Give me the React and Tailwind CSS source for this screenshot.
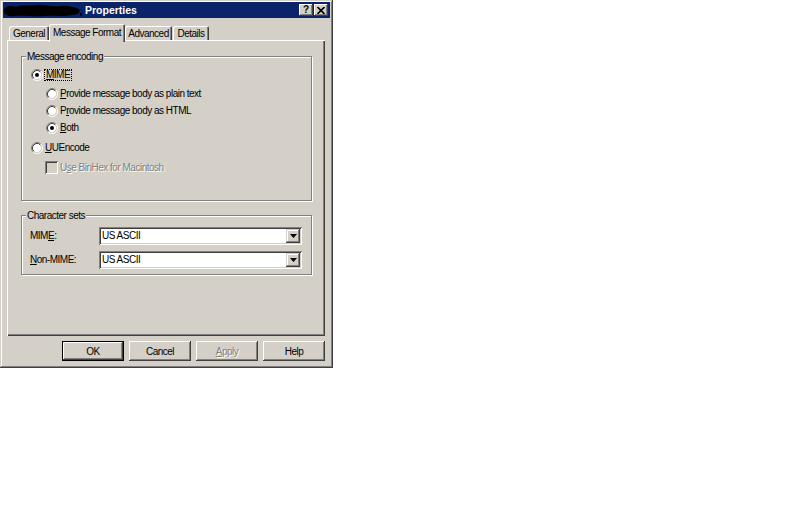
import React from "react";

function Radio({ checked }) {
  return (
    <svg width="12" height="12" viewBox="0 0 12 12" className="shrink-0">
      <circle cx="6" cy="6" r="4.2" fill="#ffffff" />
      <path d="M2.11 9.89 A5.5 5.5 0 0 1 9.89 2.11" fill="none" stroke="#808080" strokeWidth="1" />
      <path d="M9.89 2.11 A5.5 5.5 0 0 1 2.11 9.89" fill="none" stroke="#ffffff" strokeWidth="1" />
      <path d="M2.82 9.18 A4.5 4.5 0 0 1 9.18 2.82" fill="none" stroke="#404040" strokeWidth="1" />
      <path d="M9.18 2.82 A4.5 4.5 0 0 1 2.82 9.18" fill="none" stroke="#d4d0c8" strokeWidth="1" />
      {checked && <circle cx="6" cy="6" r="2" fill="#000000" />}
    </svg>
  );
}

function U({ children }) {
  return <span className="underline decoration-1 underline-offset-[1px]">{children}</span>;
}

function Tab({ label, selected, w, extra = "" }) {
  if (selected) {
    return (
      <div
        className={`relative z-10 ${w} h-[18px] mb-[-2px] bg-[#d4d0c8] rounded-t-[2px] shadow-[inset_1px_1px_#ffffff,inset_-1px_0_#404040,inset_-2px_0_#808080] flex items-start justify-center pt-[3px] ${extra}`}
      >
        <span className="leading-[12px] whitespace-nowrap">{label}</span>
      </div>
    );
  }
  return (
    <div
      className={`${w} h-[14px] bg-[#d4d0c8] rounded-t-[2px] shadow-[inset_1px_1px_#ffffff,inset_-1px_0_#404040,inset_-2px_0_#808080] flex items-start justify-center pt-[2px] ${extra}`}
    >
      <span className="leading-[12px] whitespace-nowrap">{label}</span>
    </div>
  );
}

function Combo({ value }) {
  return (
    <div className="w-[203px] h-[18px] bg-white shadow-[inset_1px_1px_#808080,inset_-1px_-1px_#ffffff,inset_2px_2px_#404040,inset_-2px_-2px_#d4d0c8] flex items-center justify-between p-[2px]">
      <span className="pl-[1px] leading-[12px]">{value}</span>
      <div className="w-[14px] h-[14px] bg-[#d4d0c8] shadow-[inset_-1px_-1px_#404040,inset_1px_1px_#d4d0c8,inset_-2px_-2px_#808080,inset_2px_2px_#ffffff] flex items-center justify-center">
        <svg width="7" height="4" viewBox="0 0 7 4">
          <path d="M0 0 H7 L3.5 4 Z" fill="#000000" />
        </svg>
      </div>
    </div>
  );
}

function Button({ children, def, disabled }) {
  const inner = (
    <div
      className={`w-full h-full flex items-center justify-center shadow-[inset_-1px_-1px_#404040,inset_1px_1px_#ffffff,inset_-2px_-2px_#808080,inset_2px_2px_#d4d0c8] ${
        disabled ? "text-[#808080] [text-shadow:1px_1px_0_#ffffff]" : "text-black"
      }`}
    >
      {children}
    </div>
  );
  return (
    <div className={`w-[62px] h-[20px] bg-[#d4d0c8] ${def ? "border border-black" : ""}`}>{inner}</div>
  );
}

export default function App() {
  return (
    <div className="w-[800px] h-[526px] bg-white font-['Liberation_Sans',Arial,sans-serif] text-[10px] tracking-[-0.5px] text-black">
      <div className="w-[333px] h-[368px] bg-[#d4d0c8] shadow-[inset_-1px_-1px_#404040,inset_1px_1px_#d4d0c8,inset_-2px_-2px_#808080,inset_2px_2px_#ffffff] pt-[2px] px-[3px] flex flex-col">
        {/* Title bar */}
        <div className="h-[16px] bg-[#0a246a] flex items-center justify-between pr-[2px]">
          <div className="flex items-center">
            <svg width="80" height="16" viewBox="0 0 80 16" className="shrink-0">
              <path
                d="M1 8 C2 4 8 3 13 5 C19 2 27 4 33 3 C41 2 49 5 57 4 C64 3 71 5 76 7 C78 10 75 13 69 13 C60 15 50 13 41 14 C31 15 21 13 12 14 C5 15 0 12 1 8 Z"
                fill="#000000"
              />
              <path d="M77 11 L79 11 L78.5 14 L77 13.5 Z" fill="#000000" />
            </svg>
            <span className="ml-[2px] text-white font-bold text-[10.5px] tracking-[0px] leading-[12px]">Properties</span>
          </div>
          <div className="flex items-center gap-[1px]">
            <div className="w-[14px] h-[12px] bg-[#d4d0c8] shadow-[inset_-1px_-1px_#404040,inset_1px_1px_#ffffff,inset_-2px_-2px_#808080] flex items-center justify-center">
              <span className="font-bold text-[10px] leading-[10px] tracking-[0px]">?</span>
            </div>
            <div className="w-[14px] h-[12px] bg-[#d4d0c8] shadow-[inset_-1px_-1px_#404040,inset_1px_1px_#ffffff,inset_-2px_-2px_#808080] flex items-center justify-center">
              <svg width="8" height="7" viewBox="0 0 8 7">
                <path d="M0.5 0 L7.5 7 M7.5 0 L0.5 7" stroke="#000000" strokeWidth="1.6" />
              </svg>
            </div>
          </div>
        </div>

        <div className="px-[4px]">
          {/* Tabs */}
          <div className="mt-[6px] h-[16px] flex items-end pl-[2px]">
            <Tab label="General" w="w-[40px]" />
            <Tab label="Message Format" w="w-[76px]" selected />
            <Tab label="Advanced" w="w-[47px]" />
            <Tab label="Details" w="w-[36px]" extra="ml-[1px]" />
          </div>

          {/* Panel */}
          <div className="w-[318px] h-[296px] shadow-[inset_1px_1px_#ffffff,inset_-1px_-1px_#404040,inset_-2px_-2px_#808080] pt-[10px] pl-[14px]">
            <fieldset className="w-[291px] h-[151px] border border-[#808080] shadow-[1px_1px_0_#ffffff,inset_1px_1px_0_#ffffff] p-0 m-0 flex flex-col">
              <legend className="ml-[4px] px-[1px] leading-[13px] bg-[#d4d0c8]">Message encoding</legend>
              <div className="pl-[9px] mt-[3px] flex flex-col">
                <div className="h-[17px] flex items-center">
                  <Radio checked />
                  <span className="ml-[1px] border border-dotted border-black px-[1px] leading-[10px]">
                    <U>M</U>IME
                  </span>
                </div>
                <div className="mt-[2px] h-[17px] flex items-center pl-[15px]">
                  <Radio />
                  <span className="ml-[2px] leading-[12px]">
                    <U>P</U>rovide message body as plain text
                  </span>
                </div>
                <div className="h-[17px] flex items-center pl-[15px]">
                  <Radio />
                  <span className="ml-[2px] leading-[12px]">
                    P<U>r</U>ovide message body as HTML
                  </span>
                </div>
                <div className="h-[17px] flex items-center pl-[15px]">
                  <Radio checked />
                  <span className="ml-[2px] leading-[12px]">
                    <U>B</U>oth
                  </span>
                </div>
                <div className="mt-[3px] h-[17px] flex items-center">
                  <Radio />
                  <span className="ml-[2px] leading-[12px]">
                    <U>U</U>UEncode
                  </span>
                </div>
                <div className="mt-[3px] h-[17px] flex items-center pl-[14px]">
                  <div className="w-[13px] h-[13px] bg-[#d4d0c8] shadow-[inset_1px_1px_#808080,inset_-1px_-1px_#ffffff,inset_2px_2px_#404040,inset_-2px_-2px_#d4d0c8] shrink-0" />
                  <span className="ml-[2px] leading-[12px] text-[#808080] [text-shadow:1px_1px_0_#ffffff]">
                    U<U>s</U>e BinHex for Macintosh
                  </span>
                </div>
              </div>
            </fieldset>

            <fieldset className="mt-[8px] w-[291px] h-[66px] border border-[#808080] shadow-[1px_1px_0_#ffffff,inset_1px_1px_0_#ffffff] p-0 m-0 flex flex-col">
              <legend className="ml-[4px] px-[1px] leading-[13px] bg-[#d4d0c8]">Character sets</legend>
              <div className="pl-[8px] mt-[5px] flex flex-col gap-[6px]">
                <div className="flex items-center">
                  <span className="w-[69px] leading-[12px] -mt-[1px]">
                    MIM<U>E</U>:
                  </span>
                  <Combo value="US ASCII" />
                </div>
                <div className="flex items-center">
                  <span className="w-[69px] leading-[12px] -mt-[1px]">
                    <U>N</U>on-MIME:
                  </span>
                  <Combo value="US ASCII" />
                </div>
              </div>
            </fieldset>
          </div>

          {/* Buttons */}
          <div className="mt-[5px] w-[318px] flex justify-end gap-[5px]">
            <Button def>OK</Button>
            <Button>Cancel</Button>
            <Button disabled>
              <U>A</U>pply
            </Button>
            <Button>Help</Button>
          </div>
        </div>
      </div>
    </div>
  );
}
